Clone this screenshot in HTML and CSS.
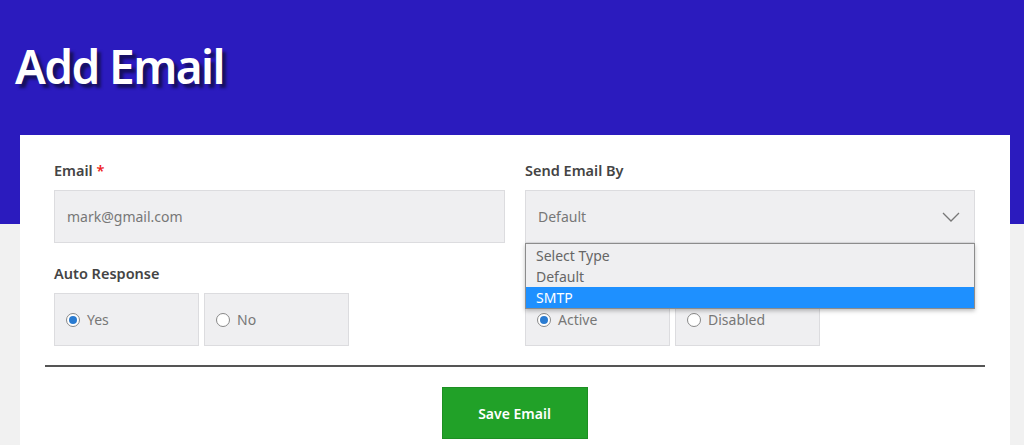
FILE: index.html
```html
<!DOCTYPE html>
<html lang="en">
<head>
  <meta charset="UTF-8" />
  <meta name="viewport" content="width=device-width,initial-scale=1.0" />
  <title>Add Email</title>
  <link rel="stylesheet" href="styles.css">
</head>
<body>

  <!-- Blue header band -->
  <div class="hero">
    <h1 class="hero-title">Add Email</h1>
  </div>

  <!-- Form card -->
  <div class="card">
    <div class="form-grid">
      <div class="field">
        <label class="field-label">Email <span class="req">*</span></label>
        <div class="text-box">mark@gmail.com</div>
      </div>

      <div class="field">
        <label class="field-label">Send Email By</label>
        <div class="select-wrap">
          <div class="text-box select-box">
            <span>Default</span>
            <svg class="chevron" width="18" height="10" viewBox="0 0 18 10">
              <path d="M1 1 L9 9 L17 1" fill="none" stroke="#777" stroke-width="1.3" />
            </svg>
          </div>
          <!-- open options list -->
          <ul class="select-menu">
            <li>Select Type</li>
            <li>Default</li>
            <li class="selected">SMTP</li>
          </ul>
        </div>
      </div>

      <div class="field">
        <label class="field-label">Auto Response</label>
        <div class="radio-row">
          <div class="radio-box"><span class="radio checked"></span>Yes</div>
          <div class="radio-box"><span class="radio"></span>No</div>
        </div>
      </div>

      <div class="field">
        <!-- label sits under the open menu -->
        <label class="field-label">&nbsp;</label>
        <div class="radio-row">
          <div class="radio-box"><span class="radio checked"></span>Active</div>
          <div class="radio-box"><span class="radio"></span>Disabled</div>
        </div>
      </div>
    </div>

    <hr class="divider">

    <div class="actions">
      <button class="save-btn">Save Email</button>
    </div>
  </div>

</body>
</html>
```

FILE: styles.css
```css
body {
  margin: 0;
  background: #f1f1f1;
  font-family: "Noto Sans", "Open Sans", sans-serif;
  color: #444;
  overflow: hidden;
}
.hero {
  background: #2b1bbe;
  height: 224px;
  padding: 37px 0 0 15px;
  box-sizing: border-box;
}
.hero-title {
  margin: 0;
  font-size: 46px;
  line-height: 58px;
  font-weight: 600;
  color: #fff;
  letter-spacing: -1.6px;
  text-shadow: 4px 4px 3px #16105e;
}
.card {
  background: #fff;
  width: 990px;
  margin: -89px 0 0 20px;
  padding: 25px 35px 10px 34px;
  box-sizing: border-box;
  min-height: 320px;
}
.form-grid {
  display: grid;
  grid-template-columns: 451px 450px;
  column-gap: 20px;
  row-gap: 20px;
}
.field-label {
  display: block;
  font-size: 14.5px;
  font-weight: 600;
  line-height: 20px;
  margin-bottom: 10px;
  color: #444;
}
.req {
  color: #e22;
}
.text-box {
  height: 53px;
  box-sizing: border-box;
  background: #efeff1;
  border: 1px solid #dcdcdf;
  padding: 0 12px;
  display: flex;
  align-items: center;
  font-size: 14px;
  color: #777;
}
.select-wrap {
  position: relative;
}
.select-box {
  justify-content: space-between;
  padding-right: 14px;
}
.select-menu {
  position: absolute;
  top: 53px;
  left: 0;
  right: 0;
  margin: 0;
  padding: 1px 0 0;
  list-style: none;
  background: #efeff1;
  border: 1px solid #8c8c8c;
  box-shadow: 0 2px 4px rgba(0, 0, 0, 0.25);
  z-index: 2;
}
.select-menu li {
  height: 21px;
  line-height: 21px;
  padding: 0 10px;
  font-size: 14px;
  color: #666;
}
.select-menu li.selected {
  background: #1e90ff;
  color: #fff;
}
.radio-row {
  display: flex;
  gap: 5px;
}
.radio-box {
  width: 145px;
  height: 53px;
  box-sizing: border-box;
  background: #efeff1;
  border: 1px solid #dcdcdf;
  display: flex;
  align-items: center;
  padding-left: 11px;
  font-size: 14px;
  color: #777;
}
.radio {
  width: 14px;
  height: 14px;
  box-sizing: border-box;
  border: 1px solid #888;
  border-radius: 50%;
  background: #fff;
  margin-right: 7px;
  position: relative;
}
.radio.checked::after {
  content: "";
  position: absolute;
  top: 2px;
  left: 2px;
  width: 8px;
  height: 8px;
  border-radius: 50%;
  background: #2a7bd1;
}
.divider {
  border: 0;
  height: 2px;
  background: #555;
  margin: 19px -10px 0 -9px;
}
.actions {
  display: flex;
  justify-content: center;
  margin-top: 20px;
}
.save-btn {
  width: 146px;
  height: 52px;
  background: #21a128;
  border: 1px solid #1d8f23;
  color: #fff;
  font-family: inherit;
  font-size: 14px;
  font-weight: 600;
  cursor: pointer;
}
```
